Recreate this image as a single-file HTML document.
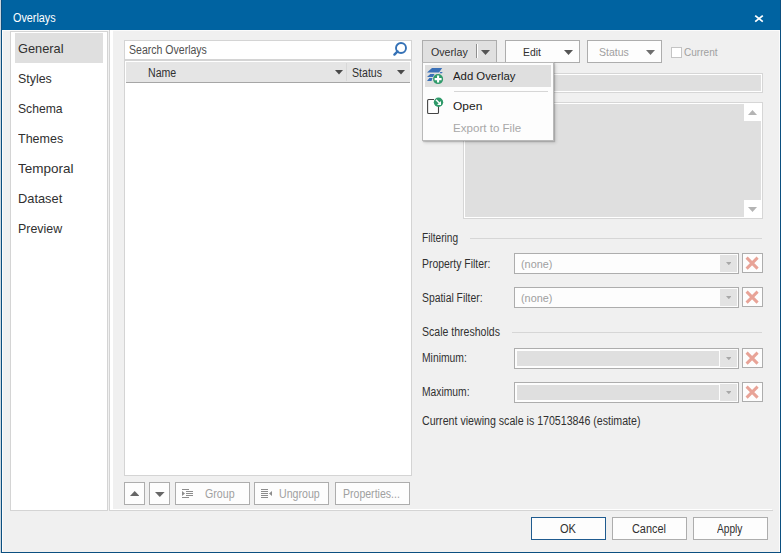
<!DOCTYPE html>
<html><head><meta charset="utf-8">
<style>
*{margin:0;padding:0;box-sizing:border-box}
html,body{width:781px;height:553px;overflow:hidden;background:#c9d5de}
body{position:relative;font-family:"Liberation Sans",sans-serif;font-size:11px;color:#303030}
.a{position:absolute}
.t{position:absolute;white-space:nowrap;line-height:20px;height:20px;transform-origin:0 0}
.btn{position:absolute;border:1px solid #adadad;background:#fdfdfd}
.tri{position:absolute;width:0;height:0;border-style:solid;border-color:transparent}
</style></head><body>
<div class="a" style="left:1px;top:0px;width:780px;height:553px;background:#0b4f80;"></div>
<div class="a" style="left:2px;top:0px;width:778px;height:30px;background:#0063a1;"></div>
<svg class="a" style="left:754px;top:14px" width="10" height="9" viewBox="0 0 10 9"><path d="M1.2 1.6L8.8 7.6M8.8 1.6L1.2 7.6" stroke="#fff" stroke-width="1.8"/></svg>
<div class="a" style="left:2px;top:30px;width:778px;height:522px;background:#f0f0f0;border-top:1px solid #fbfbfb;border-left:1px solid #fcfcfc;border-right:1px solid #fcfcfc"></div>
<div class="a" style="left:10px;top:31px;width:98px;height:480px;background:#fff;border:1px solid #d4d4d4;"></div>
<div class="a" style="left:15px;top:33px;width:88px;height:30px;background:#dfdfdf;"></div>
<div class="a" style="left:109px;top:30px;width:664px;height:481px;border-left:1px solid #d4d4d4;border-bottom:1px solid #d4d4d4"></div>
<div class="a" style="left:110px;top:30px;width:3px;height:479px;background:#fff;"></div>
<div class="a" style="left:110px;top:509px;width:662px;height:1px;background:#fff;"></div>
<div class="a" style="left:124px;top:40px;width:288px;height:20px;background:#fff;border:1px solid #d4d4d4;"></div>
<svg class="a" style="left:392px;top:41px" width="16" height="16" viewBox="0 0 16 16"><circle cx="9" cy="7" r="5" fill="none" stroke="#3471b6" stroke-width="1.9"/><path d="M5.6 10.4L2.4 13.6" stroke="#3471b6" stroke-width="2.4" stroke-linecap="round"/></svg>
<div class="a" style="left:124px;top:60px;width:288px;height:416px;background:#fff;border:1px solid #d4d4d4;"></div>
<div class="a" style="left:126px;top:62px;width:284px;height:20px;background:#e5e5e5;"></div>
<div class="a" style="left:126px;top:82px;width:284px;height:1px;background:#a6a6a6;"></div>
<div class="a" style="left:346px;top:63px;width:1px;height:18px;background:#d8d8d8;"></div>
<svg class="a" style="left:334.8px;top:70px" width="8" height="4.6" viewBox="0 0 8 4.6"><path d="M0 0H8L4.0 4.6Z" fill="#4a4a4a"/></svg>
<svg class="a" style="left:397.4px;top:70px" width="8" height="4.6" viewBox="0 0 8 4.6"><path d="M0 0H8L4.0 4.6Z" fill="#4a4a4a"/></svg>
<div class="a" style="left:124px;top:482px;width:21px;height:23px;background:#fdfdfd;border:1px solid #adadad;"></div>
<svg class="a" style="left:129.8px;top:491px" width="9.4" height="5" viewBox="0 0 9.4 5"><path d="M0 5H9.4L4.7 0Z" fill="#666"/></svg>
<div class="a" style="left:149px;top:482px;width:21px;height:23px;background:#fdfdfd;border:1px solid #adadad;"></div>
<svg class="a" style="left:155px;top:492px" width="9.6" height="5" viewBox="0 0 9.6 5"><path d="M0 0H9.6L4.8 5Z" fill="#666"/></svg>
<div class="a" style="left:175px;top:482px;width:75px;height:23px;background:#fdfdfd;border:1px solid #adadad;"></div>
<svg class="a" style="left:182px;top:489px" width="12" height="10" viewBox="0 0 12 10"><path d="M0 0.5H7M4 2.5H11M4 4.5H11M4 6.5H11M0 8.5H7" stroke="#8c8c8c" stroke-width="1"/><path d="M0 2V7L3 4.5Z" fill="#8c8c8c"/></svg>
<div class="a" style="left:254px;top:482px;width:75px;height:23px;background:#fdfdfd;border:1px solid #adadad;"></div>
<svg class="a" style="left:261px;top:489px" width="12" height="10" viewBox="0 0 12 10"><path d="M0 0.5H7M0 2.5H7M0 4.5H7M0 6.5H7M0 8.5H7" stroke="#8c8c8c" stroke-width="1"/><path d="M11 2V7L8 4.5Z" fill="#8c8c8c"/></svg>
<div class="a" style="left:335px;top:482px;width:75px;height:23px;background:#fdfdfd;border:1px solid #adadad;"></div>
<div class="a" style="left:422px;top:40px;width:75px;height:23px;background:#e0e0e0;border:1px solid #adadad;"></div>
<div class="a" style="left:476px;top:44px;width:1px;height:14px;background:#8f8f8f;"></div>
<div class="a" style="left:477px;top:44px;width:1px;height:14px;background:#ffffff;"></div>
<svg class="a" style="left:481px;top:50px" width="9" height="5" viewBox="0 0 9 5"><path d="M0 0H9L4.5 5Z" fill="#555"/></svg>
<div class="a" style="left:505px;top:40px;width:75px;height:23px;background:#fdfdfd;border:1px solid #adadad;"></div>
<svg class="a" style="left:564px;top:50px" width="9" height="5" viewBox="0 0 9 5"><path d="M0 0H9L4.5 5Z" fill="#555"/></svg>
<div class="a" style="left:587px;top:40px;width:75px;height:23px;background:#fdfdfd;border:1px solid #adadad;"></div>
<svg class="a" style="left:646px;top:50px" width="9" height="5" viewBox="0 0 9 5"><path d="M0 0H9L4.5 5Z" fill="#6e6e6e"/></svg>
<div class="a" style="left:671px;top:47px;width:11px;height:11px;background:#fff;border:1px solid #c4c4c4;"></div>
<div class="a" style="left:423px;top:73px;width:340px;height:20px;background:#fff;border:1px solid #d6d6d6;"></div>
<div class="a" style="left:425px;top:75px;width:336px;height:16px;background:#dfdfdf;"></div>
<div class="a" style="left:463px;top:102px;width:300px;height:117px;background:#fff;border:1px solid #d6d6d6;"></div>
<div class="a" style="left:465px;top:104px;width:279px;height:113px;background:#dfdfdf;"></div>
<div class="a" style="left:744px;top:121px;width:17px;height:79px;background:#dfdfdf;"></div>
<svg class="a" style="left:748px;top:110px" width="9" height="5" viewBox="0 0 9 5"><path d="M0 5H9L4.5 0Z" fill="#b4b4b4"/></svg>
<svg class="a" style="left:748px;top:207px" width="9" height="5" viewBox="0 0 9 5"><path d="M0 0H9L4.5 5Z" fill="#b4b4b4"/></svg>
<div class="a" style="left:470px;top:238px;width:292px;height:1px;background:#d6d6d6;"></div>
<div class="a" style="left:514px;top:253px;width:225px;height:21px;background:#fdfdfd;border:1px solid #adadad;"></div>
<div class="a" style="left:720px;top:255px;width:17px;height:17px;background:#e3e3e3;"></div>
<svg class="a" style="left:725.8px;top:261.8px" width="5.6" height="3.2" viewBox="0 0 5.6 3.2"><path d="M0 0H5.6L2.8 3.2Z" fill="#a8a8a8"/></svg>
<div class="a" style="left:742px;top:253px;width:21px;height:20px;background:#fdfdfd;border:1px solid #adadad;"></div>
<svg class="a" style="left:745px;top:256px" width="14" height="14" viewBox="0 0 14 14"><path d="M1.6 1.6L12.6 12.6M12.6 1.6L1.6 12.6" stroke="#e8a397" stroke-width="3"/></svg>
<div class="a" style="left:514px;top:287px;width:225px;height:21px;background:#fdfdfd;border:1px solid #adadad;"></div>
<div class="a" style="left:720px;top:289px;width:17px;height:17px;background:#e3e3e3;"></div>
<svg class="a" style="left:725.8px;top:295.8px" width="5.6" height="3.2" viewBox="0 0 5.6 3.2"><path d="M0 0H5.6L2.8 3.2Z" fill="#a8a8a8"/></svg>
<div class="a" style="left:742px;top:287px;width:21px;height:20px;background:#fdfdfd;border:1px solid #adadad;"></div>
<svg class="a" style="left:745px;top:290px" width="14" height="14" viewBox="0 0 14 14"><path d="M1.6 1.6L12.6 12.6M12.6 1.6L1.6 12.6" stroke="#e8a397" stroke-width="3"/></svg>
<div class="a" style="left:512px;top:332px;width:250px;height:1px;background:#d6d6d6;"></div>
<div class="a" style="left:514px;top:348px;width:225px;height:21px;background:#fdfdfd;border:1px solid #adadad;"></div>
<div class="a" style="left:517px;top:351px;width:202px;height:15px;background:#dfdfdf;"></div>
<div class="a" style="left:720px;top:350px;width:17px;height:17px;background:#e3e3e3;"></div>
<svg class="a" style="left:725.8px;top:356.8px" width="5.6" height="3.2" viewBox="0 0 5.6 3.2"><path d="M0 0H5.6L2.8 3.2Z" fill="#a8a8a8"/></svg>
<div class="a" style="left:742px;top:348px;width:21px;height:20px;background:#fdfdfd;border:1px solid #adadad;"></div>
<svg class="a" style="left:745px;top:351px" width="14" height="14" viewBox="0 0 14 14"><path d="M1.6 1.6L12.6 12.6M12.6 1.6L1.6 12.6" stroke="#e8a397" stroke-width="3"/></svg>
<div class="a" style="left:514px;top:382px;width:225px;height:21px;background:#fdfdfd;border:1px solid #adadad;"></div>
<div class="a" style="left:517px;top:385px;width:202px;height:15px;background:#dfdfdf;"></div>
<div class="a" style="left:720px;top:384px;width:17px;height:17px;background:#e3e3e3;"></div>
<svg class="a" style="left:725.8px;top:390.8px" width="5.6" height="3.2" viewBox="0 0 5.6 3.2"><path d="M0 0H5.6L2.8 3.2Z" fill="#a8a8a8"/></svg>
<div class="a" style="left:742px;top:382px;width:21px;height:20px;background:#fdfdfd;border:1px solid #adadad;"></div>
<svg class="a" style="left:745px;top:385px" width="14" height="14" viewBox="0 0 14 14"><path d="M1.6 1.6L12.6 12.6M12.6 1.6L1.6 12.6" stroke="#e8a397" stroke-width="3"/></svg>
<div class="a" style="left:531px;top:517px;width:75px;height:23px;background:#fdfdfd;border:1px solid #1f5b8f;"></div>
<div class="a" style="left:612px;top:517px;width:75px;height:23px;background:#fdfdfd;border:1px solid #adadad;"></div>
<div class="a" style="left:693px;top:517px;width:75px;height:23px;background:#fdfdfd;border:1px solid #adadad;"></div>
<div class="t" id="t0" style="left:13.01px;top:8.04px;font-size:12.00px;transform:scaleX(0.9008);color:#ffffff">Overlays</div>
<div class="t" id="t1" style="left:17.72px;top:38.92px;font-size:13.30px;transform:scaleX(0.9634);color:#303030">General</div>
<div class="t" id="t2" style="left:18.37px;top:68.84px;font-size:13.30px;transform:scaleX(0.9328);color:#303030">Styles</div>
<div class="t" id="t3" style="left:18.39px;top:98.80px;font-size:13.30px;transform:scaleX(0.9139);color:#303030">Schema</div>
<div class="t" id="t4" style="left:18.23px;top:129.39px;font-size:13.30px;transform:scaleX(0.9398);color:#303030">Themes</div>
<div class="t" id="t5" style="left:17.97px;top:158.54px;font-size:13.30px;transform:scaleX(1.0145);color:#303030">Temporal</div>
<div class="t" id="t6" style="left:17.77px;top:189.39px;font-size:13.30px;transform:scaleX(0.9648);color:#303030">Dataset</div>
<div class="t" id="t7" style="left:17.81px;top:219.39px;font-size:13.30px;transform:scaleX(0.9322);color:#303030">Preview</div>
<div class="t" id="t8" style="left:128.73px;top:40.45px;font-size:12.50px;transform:scaleX(0.8430);color:#505050">Search Overlays</div>
<div class="t" id="t9" style="left:147.70px;top:63.34px;font-size:12.50px;transform:scaleX(0.8469);color:#303030">Name</div>
<div class="t" id="t10" style="left:351.70px;top:63.42px;font-size:12.50px;transform:scaleX(0.8464);color:#303030">Status</div>
<div class="t" id="t11" style="left:430.82px;top:41.60px;font-size:11.50px;transform:scaleX(0.9264);color:#303030">Overlay</div>
<div class="t" id="t12" style="left:523.26px;top:41.94px;font-size:11.50px;transform:scaleX(0.8988);color:#303030">Edit</div>
<div class="t" id="t13" style="left:599.43px;top:41.98px;font-size:11.50px;transform:scaleX(0.9138);color:#a0a0a0">Status</div>
<div class="t" id="t14" style="left:684.17px;top:41.50px;font-size:11.50px;transform:scaleX(0.8751);color:#a0a0a0">Current</div>
<div class="t" id="t18" style="left:421.54px;top:227.84px;font-size:12.00px;transform:scaleX(0.8449);color:#303030">Filtering</div>
<div class="t" id="t19" style="left:421.95px;top:254.34px;font-size:12.00px;transform:scaleX(0.8682);color:#303030">Property Filter:</div>
<div class="t" id="t20" style="left:520.83px;top:253.55px;font-size:11.20px;transform:scaleX(0.9699);color:#a0a0a0">(none)</div>
<div class="t" id="t21" style="left:421.90px;top:288.24px;font-size:12.00px;transform:scaleX(0.8642);color:#303030">Spatial Filter:</div>
<div class="t" id="t22" style="left:520.83px;top:287.55px;font-size:11.20px;transform:scaleX(0.9699);color:#a0a0a0">(none)</div>
<div class="t" id="t23" style="left:421.88px;top:321.85px;font-size:12.00px;transform:scaleX(0.8783);color:#303030">Scale thresholds</div>
<div class="t" id="t24" style="left:421.68px;top:347.86px;font-size:12.00px;transform:scaleX(0.8618);color:#303030">Minimum:</div>
<div class="t" id="t25" style="left:421.67px;top:382.07px;font-size:12.00px;transform:scaleX(0.8591);color:#303030">Maximum:</div>
<div class="t" id="t26" style="left:421.60px;top:410.99px;font-size:12.00px;transform:scaleX(0.8854);color:#303030">Current viewing scale is 170513846 (estimate)</div>
<div class="t" id="t27" style="left:205.02px;top:484.14px;font-size:12.00px;transform:scaleX(0.8872);color:#a0a0a0">Group</div>
<div class="t" id="t28" style="left:278.69px;top:483.90px;font-size:12.00px;transform:scaleX(0.8837);color:#a0a0a0">Ungroup</div>
<div class="t" id="t29" style="left:343.22px;top:484.19px;font-size:12.00px;transform:scaleX(0.8781);color:#a0a0a0">Properties...</div>
<div class="t" id="t30" style="left:560.01px;top:519.47px;font-size:12.00px;transform:scaleX(0.9228);color:#303030">OK</div>
<div class="t" id="t31" style="left:631.55px;top:519.44px;font-size:12.00px;transform:scaleX(0.9078);color:#303030">Cancel</div>
<div class="t" id="t32" style="left:716.61px;top:519.39px;font-size:12.00px;transform:scaleX(0.8473);color:#303030">Apply</div>
<div class="a" style="left:422px;top:62px;width:132px;height:79px;background:#fdfdfd;border:1px solid #b9b9b9;box-shadow:1px 1px 1px rgba(0,0,0,0.16),2px 2px 3px rgba(0,0,0,0.12)"></div>
<div class="a" style="left:425px;top:65px;width:126px;height:22px;background:#dfdfdf;"></div>
<div class="a" style="left:454px;top:91px;width:94px;height:1px;background:#d6d6d6;"></div>
<svg class="a" style="left:424px;top:64px" width="22" height="22" viewBox="0 0 22 22"><path d="M8 4H18.2L15 8.6H3Z M16.3 8H18.6L18 9.2H15.5Z M6.3 10H10.5L9 13H3Z M5.4 14H8.5L7.5 17H3Z" fill="#3a70b7"/><circle cx="14.1" cy="15.1" r="5" fill="#2f9a6a"/><path d="M14.1 11.6V18.6M10.6 15.1H17.6" stroke="#fff" stroke-width="2.1"/></svg>
<svg class="a" style="left:424px;top:94px" width="22" height="22" viewBox="0 0 22 22"><path d="M10 5.5H4.6Q3.6 5.5 3.6 6.5V18.5Q3.6 19.5 4.6 19.5H13.5Q14.5 19.5 14.5 18.5V11" fill="#fff" stroke="#454545" stroke-width="1.1"/><circle cx="14.5" cy="8.3" r="4.7" fill="#2f9a6a"/><path d="M12 5.8L16 9.8" stroke="#fff" stroke-width="1.5"/><path d="M17 7V11H13Z" fill="#fff"/></svg>
<div class="t" id="t15" style="left:452.92px;top:66.35px;font-size:11.30px;transform:scaleX(1.0044);color:#202020">Add Overlay</div>
<div class="t" id="t16" style="left:453.07px;top:95.89px;font-size:11.30px;transform:scaleX(1.0596);color:#202020">Open</div>
<div class="t" id="t17" style="left:452.86px;top:118.21px;font-size:11.30px;transform:scaleX(1.0249);color:#a8a8a8">Export to File</div>
</body></html>
